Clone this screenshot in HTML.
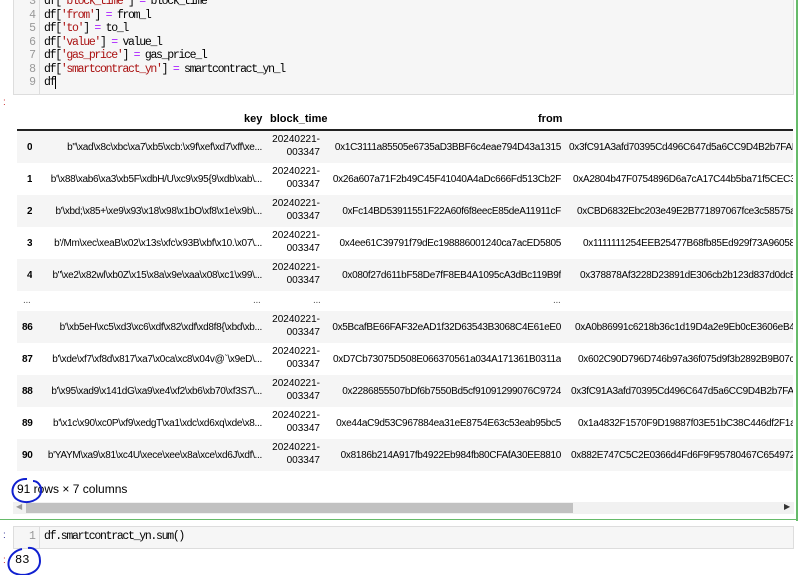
<!DOCTYPE html>
<html><head><meta charset="utf-8"><style>
*{margin:0;padding:0;box-sizing:border-box}
body{width:800px;height:575px;background:#fff;position:relative;overflow:hidden;font-family:"Liberation Sans",Arial,sans-serif;font-size:10px;color:#000}
.a{position:absolute;white-space:nowrap}
.code{font-family:"Liberation Mono","Noto Sans CJK KR",monospace;font-size:11.5px;letter-spacing:-1.3px}
.s{color:#a11}
.o{color:#a2f}
.row{position:absolute;left:17px;width:776px;height:32px}
.g{background:#f5f5f5}
.c{position:absolute;line-height:13px;white-space:nowrap;overflow:hidden;letter-spacing:-0.3px}
.k{left:40px;width:222px;direction:rtl;text-align:right}
.k span{direction:ltr;unicode-bidi:bidi-override}
.b{left:262px;width:58px;text-align:right;letter-spacing:0}
.f{left:320px;width:241px;text-align:right}
.t{left:569px;width:230px}
</style></head><body>
<div class="a" style="left:796px;top:0;width:2px;height:521px;background:#66bb6a"></div>
<div class="a" style="left:0;top:519px;width:798px;height:1px;background:#66bb6a"></div>
<div class="a" style="left:13px;top:-2px;width:781px;height:97px;background:#f6f6f6;border:1px solid #ddd"></div>
<div class="a" style="left:39px;top:0;width:1px;height:94px;background:#ddd"></div>
<div class="a code" style="left:24px;top:-5px;line-height:13.5px;color:#999;text-align:right;width:12px;letter-spacing:0">3<br>4<br>5<br>6<br>7<br>8<br>9</div>
<div class="a code" style="left:44px;top:-5px;line-height:13.5px">df[<span class="s">'block_time'</span>] <span class="o">=</span> block_time<br>df[<span class="s">'from'</span>] <span class="o">=</span> from_l<br>df[<span class="s">'to'</span>] <span class="o">=</span> to_l<br>df[<span class="s">'value'</span>] <span class="o">=</span> value_l<br>df[<span class="s">'gas_price'</span>] <span class="o">=</span> gas_price_l<br>df[<span class="s">'smartcontract_yn'</span>] <span class="o">=</span> smartcontract_yn_l<br>df<span style="border-left:1px solid #000"></span></div>
<div class="a" style="left:3px;top:97px;color:#c33">:</div>
<div class="a" style="left:244px;top:113px;font-weight:bold;font-size:11px">key</div>
<div class="a" style="left:270px;top:113px;font-weight:bold;font-size:11px">block_time</div>
<div class="a" style="left:538px;top:113px;font-weight:bold;font-size:11px">from</div>
<div class="a" style="left:17px;top:129px;width:776px;height:2px;background:#222"></div>

<div class="row g" style="top:131px"></div>
<div class="row" style="top:163px"></div>
<div class="row g" style="top:195px"></div>
<div class="row" style="top:227px"></div>
<div class="row g" style="top:259px"></div>
<div class="row g" style="top:311px"></div>
<div class="row" style="top:343px"></div>
<div class="row g" style="top:375px"></div>
<div class="row" style="top:407px"></div>
<div class="row g" style="top:439px"></div>

<div style="position:absolute;left:0;top:0;width:793px;height:575px;overflow:hidden">
<div class="c" style="left:27px;top:141px;font-weight:bold">0</div>
<div class="c k" style="top:141px"><span>b"\xad\x8c\xbc\xa7\xb5\xcb:\x9f\xef\xd7\xff\xe...</span></div>
<div class="c b" style="top:133px">20240221-<br>003347</div>
<div class="c f" style="top:141px">0x1C3111a85505e6735aD3BBF6c4eae794D43a1315</div>
<div class="c t" style="top:141px">0x3fC91A3afd70395Cd496C647d5a6CC9D4B2b7FAD</div>

<div class="c" style="left:27px;top:173px;font-weight:bold">1</div>
<div class="c k" style="top:173px"><span>b'\x88\xab6\xa3\xb5F\xdbH/U\xc9\x95{9\xdb\xab\...</span></div>
<div class="c b" style="top:165px">20240221-<br>003347</div>
<div class="c f" style="top:173px">0x26a607a71F2b49C45F41040A4aDc666Fd513Cb2F</div>
<div class="c t" style="top:173px;left:573px">0xA2804b47F0754896D6a7cA17C44b5ba71f5CEC33</div>

<div class="c" style="left:27px;top:205px;font-weight:bold">2</div>
<div class="c k" style="top:205px"><span>b'\xbd;\x85+\xe9\x93\x18\x98\x1bO\xf8\x1e\x9b\...</span></div>
<div class="c b" style="top:197px">20240221-<br>003347</div>
<div class="c f" style="top:205px">0xFc14BD53911551F22A60f6f8eecE85deA11911cF</div>
<div class="c t" style="top:205px;left:577px">0xCBD6832Ebc203e49E2B771897067fce3c58575ac</div>

<div class="c" style="left:27px;top:237px;font-weight:bold">3</div>
<div class="c k" style="top:237px"><span>b'/Mm\xec\xeaB\x02\x13s\xfc\x93B\xbf\x10.\x07\...</span></div>
<div class="c b" style="top:229px">20240221-<br>003347</div>
<div class="c f" style="top:237px">0x4ee61C39791f79dEc198886001240ca7acED5805</div>
<div class="c t" style="top:237px;left:583px">0x1111111254EEB25477B68fb85Ed929f73A960582</div>

<div class="c" style="left:27px;top:269px;font-weight:bold">4</div>
<div class="c k" style="top:269px"><span>b"\xe2\x82wl\xb0Z\x15\x8a\x9e\xaa\x08\xc1\x99\...</span></div>
<div class="c b" style="top:261px">20240221-<br>003347</div>
<div class="c f" style="top:269px">0x080f27d611bF58De7fF8EB4A1095cA3dBc119B9f</div>
<div class="c t" style="top:269px;left:580px">0x378878Af3228D23891dE306cb2b123d837d0dcB8</div>

<div class="c" style="left:23px;top:294px;color:#555">...</div>
<div class="c" style="left:253px;top:294px;color:#555">...</div>
<div class="c" style="left:313px;top:294px;color:#555">...</div>
<div class="c" style="left:553px;top:294px;color:#555">...</div>

<div class="c" style="left:22px;top:321px;font-weight:bold">86</div>
<div class="c k" style="top:321px"><span>b'\xb5eH\xc5\xd3\xc6\xdf\x82\xdf\xd8f8{\xbd\xb...</span></div>
<div class="c b" style="top:313px">20240221-<br>003347</div>
<div class="c f" style="top:321px">0x5BcafBE66FAF32eAD1f32D63543B3068C4E61eE0</div>
<div class="c t" style="top:321px;left:575px">0xA0b86991c6218b36c1d19D4a2e9Eb0cE3606eB48</div>

<div class="c" style="left:22px;top:353px;font-weight:bold">87</div>
<div class="c k" style="top:353px"><span>b'\xde\xf7\xf8d\x817\xa7\x0ca\xc8\x04v@`\x9eD\...</span></div>
<div class="c b" style="top:345px">20240221-<br>003347</div>
<div class="c f" style="top:353px">0xD7Cb73075D508E066370561a034A171361B0311a</div>
<div class="c t" style="top:353px;left:578px">0x602C90D796D746b97a36f075d9f3b2892B9B07c2</div>

<div class="c" style="left:22px;top:385px;font-weight:bold">88</div>
<div class="c k" style="top:385px"><span>b'\x95\xad9\x141dG\xa9\xe4\xf2\xb6\xb70\xf3S7\...</span></div>
<div class="c b" style="top:377px">20240221-<br>003347</div>
<div class="c f" style="top:385px">0x2286855507bDf6b7550Bd5cf91091299076C9724</div>
<div class="c t" style="top:385px;left:571px">0x3fC91A3afd70395Cd496C647d5a6CC9D4B2b7FAD</div>

<div class="c" style="left:22px;top:417px;font-weight:bold">89</div>
<div class="c k" style="top:417px"><span>b'\x1c\x90\xc0P\xf9\xedgT\xa1\xdc\xd6xq\xde\x8...</span></div>
<div class="c b" style="top:409px">20240221-<br>003347</div>
<div class="c f" style="top:417px">0xe44aC9d53C967884ea31eE8754E63c53eab95bc5</div>
<div class="c t" style="top:417px;left:578px">0x1a4832F1570F9D19887f03E51bC38C446df2F1a3</div>

<div class="c" style="left:22px;top:449px;font-weight:bold">90</div>
<div class="c k" style="top:449px"><span>b'YAYM\xa9\x81\xc4U\xece\xee\x8a\xce\xd6J\xdf\...</span></div>
<div class="c b" style="top:441px">20240221-<br>003347</div>
<div class="c f" style="top:449px">0x8186b214A917fb4922Eb984fb80CFAfA30EE8810</div>
<div class="c t" style="top:449px;left:571px">0x882E747C5C2E0366d4Fd6F9F95780467C654972a</div>
</div>

<div class="a" style="left:17px;top:482px;font-size:12px">91 rows × 7 columns</div>
<div class="a" style="left:13px;top:502px;width:781px;height:12px;background:#f1f1f1"></div>
<div class="a" style="left:26px;top:503px;width:547px;height:10px;background:#c1c1c1"></div>
<div class="a" style="left:16px;top:502px;font-size:8px;color:#999">◀</div>
<div class="a" style="left:784px;top:502px;font-size:8px;color:#333">▶</div>

<div class="a" style="left:3px;top:530px;color:#339">:</div>
<div class="a" style="left:13px;top:526px;width:781px;height:23px;background:#f6f6f6;border:1px solid #ddd"></div>
<div class="a" style="left:39px;top:527px;width:1px;height:21px;background:#ddd"></div>
<div class="a code" style="left:29px;top:530px;color:#999;letter-spacing:0">1</div>
<div class="a code" style="left:44px;top:530px">df.smartcontract_yn.sum()</div>
<div class="a" style="left:3px;top:555px;color:#c33">:</div>
<div class="a code" style="left:15px;top:553px;font-size:12px;letter-spacing:0">83</div>

<svg class="a" style="left:0;top:0" width="800" height="575">
<path d="M27 479 C12 478 8 495 18 500 C28 505 40 500 41 492 C42 485 37 481 33 481" fill="none" stroke="#1020d0" stroke-width="2"/>
<path d="M22 549 C8 552 4 568 14 573 C26 578 40 572 40 561 C40 552 34 547 28 548" fill="none" stroke="#1020d0" stroke-width="2"/>
</svg>
</body></html>
